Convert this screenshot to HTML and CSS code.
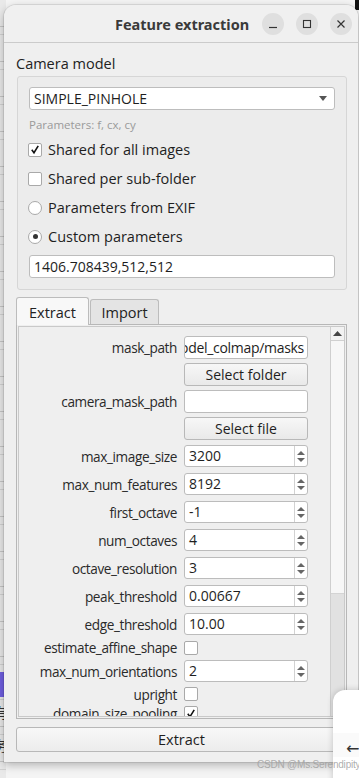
FILE: index.html
```html
<!DOCTYPE html>
<html>
<head>
<meta charset="utf-8">
<link rel="stylesheet" href="styles.css">
</head>
<body>
<div class="desk-left">
  <span class="desk-purple"></span>
  <span class="desk-ch c1">有</span>
  <span class="desk-ch c2">务</span>
</div>
<div class="desk-corner"></div>
<div class="window">
  <div class="titlebar">
    <span class="title">Feature extraction</span>
    <div class="wbtns">
      <span class="wbtn"><svg width="10" height="10" viewBox="0 0 10 10"><path d="M1 8.5H9" stroke="#333" stroke-width="1.2"/></svg></span>
      <span class="wbtn"><svg width="10" height="10" viewBox="0 0 10 10"><rect x="1.5" y="1.5" width="7" height="7" fill="none" stroke="#333" stroke-width="1.1"/></svg></span>
      <span class="wbtn"><svg width="10" height="10" viewBox="0 0 10 10"><path d="M1.5 1.5L8.5 8.5M8.5 1.5L1.5 8.5" stroke="#333" stroke-width="1.2"/></svg></span>
    </div>
  </div>
  <div class="content">
    <div class="section-label">Camera model</div>
    <div class="group">
      <div class="combo"><span>SIMPLE_PINHOLE</span><svg class="combo-arrow" width="8" height="5" viewBox="0 0 8 5"><path d="M0 0H8L4 5Z" fill="#555"/></svg></div>
      <div class="hint">Parameters: f, cx, cy</div>
      <div class="opt"><span class="cb"><svg width="13" height="13" viewBox="0 0 13 13"><path d="M3 6.8L5.4 10L10 2.5" fill="none" stroke="#111" stroke-width="1.7"/></svg></span>Shared for all images</div>
      <div class="opt"><span class="cb"></span>Shared per sub-folder</div>
      <div class="opt"><span class="radio"></span>Parameters from EXIF</div>
      <div class="opt"><span class="radio on"></span>Custom parameters</div>
      <div class="lineedit">1406.708439,512,512</div>
    </div>
    <div class="tabs">
      <span class="tab active">Extract</span>
      <span class="tab">Import</span>
    </div>
    <div class="pane">
      <div class="scrollarea">
        <div class="form">
          <div class="row r27"><span class="lbl">mask_path</span><span class="field edit clip"><span class="cliptext">model_colmap/masks</span></span></div>
          <div class="row r27"><span class="lbl"></span><span class="field btn">Select folder</span></div>
          <div class="row r27"><span class="lbl">camera_mask_path</span><span class="field edit"></span></div>
          <div class="row r27"><span class="lbl"></span><span class="field btn">Select file</span></div>
          <div class="row r28"><span class="lbl">max_image_size</span><span class="field spin"><span class="val">3200</span><span class="arrows"><i class="up"></i><i class="dn"></i></span></span></div>
          <div class="row r28"><span class="lbl">max_num_features</span><span class="field spin"><span class="val">8192</span><span class="arrows"><i class="up"></i><i class="dn"></i></span></span></div>
          <div class="row r28"><span class="lbl">first_octave</span><span class="field spin"><span class="val">-1</span><span class="arrows"><i class="up"></i><i class="dn"></i></span></span></div>
          <div class="row r28"><span class="lbl">num_octaves</span><span class="field spin"><span class="val">4</span><span class="arrows"><i class="up"></i><i class="dn"></i></span></span></div>
          <div class="row r28"><span class="lbl">octave_resolution</span><span class="field spin"><span class="val">3</span><span class="arrows"><i class="up"></i><i class="dn"></i></span></span></div>
          <div class="row r28"><span class="lbl">peak_threshold</span><span class="field spin"><span class="val">0.00667</span><span class="arrows"><i class="up"></i><i class="dn"></i></span></span></div>
          <div class="row r28"><span class="lbl">edge_threshold</span><span class="field spin"><span class="val">10.00</span><span class="arrows"><i class="up"></i><i class="dn"></i></span></span></div>
          <div class="row r19"><span class="lbl">estimate_affine_shape</span><span class="cb"></span></div>
          <div class="row r28"><span class="lbl">max_num_orientations</span><span class="field spin"><span class="val">2</span><span class="arrows"><i class="up"></i><i class="dn"></i></span></span></div>
          <div class="row r18"><span class="lbl">upright</span><span class="cb"></span></div>
          <div class="row r20"><span class="lbl">domain_size_pooling</span><span class="cb"><svg width="13" height="13" viewBox="0 0 13 13"><path d="M3 6.8L5.4 10L10 2.5" fill="none" stroke="#111" stroke-width="1.7"/></svg></span></div>
        </div>
        <div class="vscroll">
          <div class="sb-up"><svg width="9" height="5" viewBox="0 0 9 5"><path d="M0 5H9L4.5 0Z" fill="#444"/></svg></div>
          <div class="sb-handle"></div>
          <div class="sb-trough"></div>
        </div>
      </div>
    </div>
    <div class="bigbtn">Extract</div>
  </div>
</div>
<div class="popup"><div class="popup-top"></div><div class="popup-bottom">←</div></div>
<div class="watermark">CSDN @Ms.Serendipity</div>
</body>
</html>
```

FILE: styles.css
```css
* { box-sizing: border-box; }
html, body { margin: 0; padding: 0; }
body {
  width: 359px;
  height: 778px;
  overflow: hidden;
  background: #f4f4f4;
  font-family: "Open Sans", "Noto Sans", sans-serif;
  color: #2e2e2e;
  position: relative;
}
.desk-left {
  position: absolute;
  left: 0; top: 0;
  width: 6px; height: 778px;
  overflow: hidden;
  background:
    repeating-linear-gradient(to bottom, transparent 0 26px, #c6c6c6 26px 27px, transparent 27px 34px, #d2d2d2 34px 35px),
    #e9e9e9;
}
.desk-purple {
  position: absolute;
  left: 0; top: 672px;
  width: 6px; height: 25px;
  background: #6f5ee0;
}
.desk-ch {
  position: absolute;
  left: -6px;
  font-family: "Noto Sans CJK SC", sans-serif;
  font-size: 14px;
  color: #333;
}
.c1 { top: 702px; }
.c2 { top: 735px; }
.desk-corner {
  position: absolute;
  right: 0; top: 0;
  width: 4px; height: 10px;
  background: #111;
}
.window {
  position: relative;
  margin: 5px 0 0 4px;
  width: 354px;
  height: 757px;
  background: #efefef;
  border-radius: 12px 12px 0 0;
  box-shadow: 0 3px 10px rgba(0,0,0,0.28), 0 0 0 1px rgba(0,0,0,0.08);
  display: flex;
  flex-direction: column;
}
.titlebar {
  height: 38px;
  border-bottom: 1px solid #cbcbcb;
  background: #f0f0f0;
  border-radius: 12px 12px 0 0;
  position: relative;
}
.title {
  position: absolute;
  left: 111px;
  top: 9px;
  font-family: "Noto Sans", "Open Sans", sans-serif;
  font-weight: 700;
  font-size: 14.5px;
  color: #3a3a3a;
}
.wbtns {
  position: absolute;
  right: 6px;
  top: 8px;
  display: flex;
  gap: 12px;
}
.wbtn {
  width: 22px; height: 22px;
  border-radius: 50%;
  background: #dfdfdf;
  display: flex;
  align-items: center;
  justify-content: center;
}
.content {
  padding: 0 11px 0 12px;
  display: flex;
  flex-direction: column;
}
.section-label {
  margin-top: 11px;
  height: 20px;
  line-height: 20px;
  font-size: 14.5px;
  color: #222;
}
.group {
  margin: 2px 0 0 1px;
  height: 214px;
  border: 1px solid #d6d6d6;
  border-radius: 3px;
  background: #ececec;
  padding: 10px 11px 0 11px;
}
.combo {
  height: 23px;
  background: #fff;
  border: 1px solid #bdbdbd;
  border-radius: 3px;
  display: flex;
  align-items: center;
  justify-content: space-between;
  padding: 0 7px 0 4px;
  font-size: 14px;
  color: #1e1e1e;
}
.hint {
  margin-top: 8px;
  height: 14px;
  line-height: 14px;
  font-size: 11.5px;
  color: #9a9a9a;
}
.opt {
  height: 29px;
  display: flex;
  align-items: center;
  font-size: 14.5px;
  color: #1e1e1e;
}
.hint + .opt { margin-top: 3px; }
.cb {
  width: 14px; height: 14px;
  border: 1px solid #a9a9a9;
  border-radius: 2px;
  background: #fff;
  display: inline-flex;
  align-items: center;
  justify-content: center;
  flex: none;
}
.opt .cb, .opt .radio { margin: 0 6px 0 -1px; }
.radio {
  width: 14px; height: 14px;
  border: 1px solid #a9a9a9;
  border-radius: 50%;
  background: #fff;
  display: inline-flex;
  align-items: center;
  justify-content: center;
  flex: none;
}
.radio.on::after {
  content: "";
  width: 5px; height: 5px;
  border-radius: 50%;
  background: #333;
}
.lineedit {
  margin-top: 4px;
  height: 23px;
  background: #fff;
  border: 1px solid #bdbdbd;
  border-radius: 3px;
  padding: 0 4px;
  line-height: 21px;
  font-size: 14px;
  color: #1e1e1e;
}
.tabs {
  margin-top: 7px;
  height: 27px;
  display: flex;
  align-items: flex-end;
  position: relative;
  z-index: 1;
}
.tab {
  height: 25px;
  width: 69px;
  margin-left: 1px;
  background: #e4e4e4;
  border: 1px solid #bcbcbc;
  border-bottom: none;
  border-radius: 3px 3px 0 0;
  font-size: 14.5px;
  color: #222;
  display: flex;
  align-items: center;
  justify-content: center;
}
.tab.active {
  height: 28px;
  width: 73px;
  margin-left: 0;
  margin-bottom: -1px;
  background: #f8f8f8;
  padding-top: 1px;
}
.pane {
  height: 395px;
  border: 1px solid #b7b7b7;
  padding: 1px;
  background: #efefef;
}
.scrollarea {
  height: 100%;
  border: 1px solid #c9c9c9;
  display: flex;
  overflow: hidden;
}
.form {
  flex: 1;
  padding-top: 7px;
  display: flex;
  flex-direction: column;
}
.row {
  display: flex;
  align-items: center;
  flex: none;
}
.r27 { height: 27px; }
.r28 { height: 28px; }
.r19 { height: 19px; }
.r18 { height: 18px; }
.r20 { height: 20px; }
.lbl {
  width: 158px;
  text-align: right;
  font-size: 13.6px;
  letter-spacing: -0.4px;
  color: #2a2a2a;
  margin-right: 7px;
  white-space: nowrap;
}
.field {
  width: 124px;
  height: 23px;
  border-radius: 3px;
  font-size: 14px;
  color: #1e1e1e;
  flex: none;
}
.edit {
  background: #fff;
  border: 1px solid #bcbcbc;
}
.clip {
  overflow: hidden;
  display: flex;
  justify-content: flex-end;
  align-items: center;
  padding-right: 3px;
  white-space: nowrap;
}
.cliptext { flex: none; letter-spacing: -0.3px; }
.btn {
  border: 1px solid #b8b8b8;
  background: linear-gradient(#f7f7f7, #e9e9e9);
  display: flex;
  align-items: center;
  justify-content: center;
}
.spin {
  height: 22px;
  background: #fff;
  border: 1px solid #bcbcbc;
  display: flex;
}
.val {
  flex: 1;
  padding-left: 4px;
  line-height: 20px;
}
.arrows {
  width: 13px;
  border-left: 1px solid #d2d2d2;
  display: flex;
  flex-direction: column;
  align-items: center;
  justify-content: center;
  gap: 3px;
}
.arrows i {
  width: 0; height: 0;
  border-left: 4px solid transparent;
  border-right: 4px solid transparent;
}
.arrows .up { border-bottom: 4px solid #666; }
.arrows .dn { border-top: 4px solid #666; }
.vscroll {
  width: 14px;
  border-left: 1px solid #cfcfcf;
  display: flex;
  flex-direction: column;
  background: #f2f2f2;
}
.sb-up {
  height: 14px;
  border-bottom: 1px solid #d0d0d0;
  display: flex;
  align-items: center;
  justify-content: center;
}
.sb-handle {
  height: 253px;
  background: #f7f7f7;
  border-bottom: 1px solid #d4d4d4;
}
.sb-trough {
  flex: 1;
  background: #e1e1e1;
}
.bigbtn {
  margin-top: 8px;
  height: 25px;
  border: 1px solid #b8b8b8;
  border-radius: 3px;
  background: linear-gradient(#f8f8f8, #ececec);
  display: flex;
  align-items: center;
  justify-content: center;
  font-size: 14.5px;
  color: #1e1e1e;
}
.popup {
  position: absolute;
  left: 333px;
  top: 690px;
  width: 40px;
  height: 100px;
  background: #fff;
  border-radius: 12px 0 0 0;
  box-shadow: 0 0 6px rgba(0,0,0,0.2);
  display: flex;
  flex-direction: column;
}
.popup-top { height: 43px; }
.popup-bottom {
  background: #fafafa;
  padding: 8px 0 0 13px;
  font-size: 16px;
  color: #333;
  font-family: "DejaVu Sans", sans-serif;
  line-height: 1;
}
.watermark {
  position: absolute;
  left: 257px;
  top: 759px;
  white-space: nowrap;
  font-family: "Liberation Sans", sans-serif;
  font-size: 10px;
  color: rgba(160,160,160,0.85);
  letter-spacing: -0.2px;
}
```
